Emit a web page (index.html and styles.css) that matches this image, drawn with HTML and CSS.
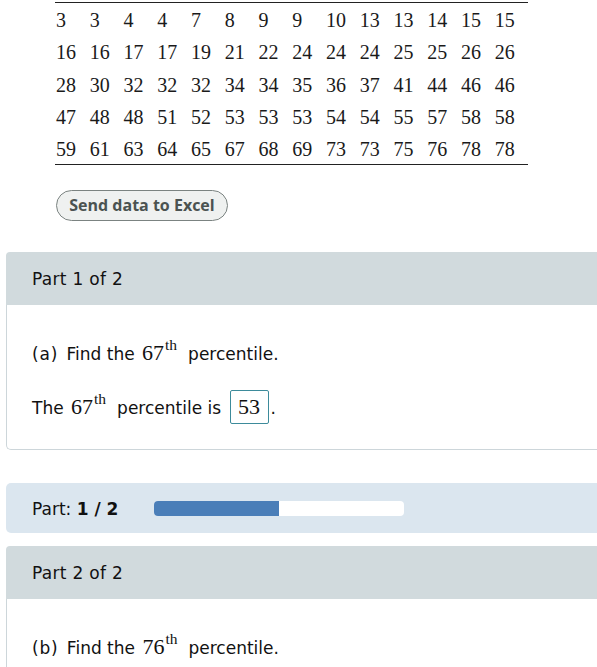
FILE: index.html
```html
<!DOCTYPE html>
<html>
<head>
<meta charset="utf-8">
<link rel="stylesheet" href="styles.css">
</head>
<body>
<div class="data">
  <div class="grid">
    <span>3</span><span>3</span><span>4</span><span>4</span><span>7</span><span>8</span><span>9</span><span>9</span><span>10</span><span>13</span><span>13</span><span>14</span><span>15</span><span>15</span>
    <span>16</span><span>16</span><span>17</span><span>17</span><span>19</span><span>21</span><span>22</span><span>24</span><span>24</span><span>24</span><span>25</span><span>25</span><span>26</span><span>26</span>
    <span>28</span><span>30</span><span>32</span><span>32</span><span>32</span><span>34</span><span>34</span><span>35</span><span>36</span><span>37</span><span>41</span><span>44</span><span>46</span><span>46</span>
    <span>47</span><span>48</span><span>48</span><span>51</span><span>52</span><span>53</span><span>53</span><span>53</span><span>54</span><span>54</span><span>55</span><span>57</span><span>58</span><span>58</span>
    <span>59</span><span>61</span><span>63</span><span>64</span><span>65</span><span>67</span><span>68</span><span>69</span><span>73</span><span>73</span><span>75</span><span>76</span><span>78</span><span>78</span>
  </div>
</div>
<button class="excel">Send data to Excel</button>

<section class="part">
  <div class="part-head">Part 1 of 2</div>
  <div class="part-body">
    <p class="q"><span class="lbl">(a)</span> Find the <span class="mathnum">67</span><span class="ord">th</span>percentile.</p>
    <p class="q q2">The <span class="mathnum">67</span><span class="ord">th</span>percentile is <span class="answer">53</span>.</p>
  </div>
</section>

<div class="progress">
  <span class="ptext">Part: <b>1 / 2</b></span>
  <div class="bar"><div class="fill" style="width:50%"></div></div>
</div>

<section class="part part2">
  <div class="part-head">Part 2 of 2</div>
  <div class="part-body">
    <p class="q"><span class="lbl">(b)</span> Find the <span class="mathnum">76</span><span class="ord">th</span>percentile.</p>
  </div>
</section>
</body>
</html>
```

FILE: styles.css
```css
html {
  overflow: hidden;
  background: #fff;
}
body {
  margin: 0;
  font-family: "DejaVu Sans", Verdana, sans-serif;
  font-size: 17px;
  color: #111;
}
.data {
  margin: 2px 0 0 55px;
  width: 473px;
  border-top: 1px solid #222;
  border-bottom: 1px solid #222;
}
.grid {
  display: grid;
  grid-template-columns: repeat(14, 33.75px);
  grid-auto-rows: 32.25px;
  font-family: "Liberation Serif", "Times New Roman", serif;
  font-size: 20px;
  line-height: 32.25px;
  color: #1a1a1a;
}
.grid span {
  padding-left: 1px;
  padding-top: 1px;
}
.excel {
  display: block;
  margin: 25px 0 0 56px;
  width: 172px;
  height: 31px;
  border: 1px solid #7b8381;
  border-radius: 16px;
  background: #eff1f0;
  font-family: "Open Sans", Lato, sans-serif;
  font-weight: 700;
  font-size: 16px;
  line-height: 27px;
  color: #4b5351;
  padding: 0 0 1px 0;
}
.part {
  margin: 31px -20px 0 6px;
}
.part-head {
  height: 53px;
  background: #d1dadd;
  border-radius: 4px 4px 0 0;
  padding-left: 26px;
  display: flex;
  align-items: center;
  padding-top: 1px;
  box-sizing: border-box;
  letter-spacing: 0.3px;
}
.part-body {
  border-left: 1px solid #cdd6da;
  border-bottom: 1px solid #cdd6da;
  border-bottom-left-radius: 5px;
  padding: 32px 0 25px 25px;
  background: #fff;
}
.q {
  margin: 0;
  height: 34px;
  line-height: 34px;
  white-space: nowrap;
}
.q2 {
  margin-top: 19px;
}
.lbl {
  letter-spacing: 0.8px;
  margin-right: 3px;
}
.mathnum {
  font-family: "Liberation Serif", serif;
  font-size: 22px;
  color: #111;
  line-height: 0;
  margin-left: 2px;
}
.ord {
  font-family: "Liberation Serif", serif;
  font-size: 15.5px;
  line-height: 0;
  vertical-align: 10.5px;
  margin-left: 1px;
  margin-right: 11px;
}
.answer {
  display: inline-block;
  box-sizing: border-box;
  width: 39px;
  height: 34px;
  border: 1px solid #3d8b9b;
  border-radius: 2px;
  text-align: center;
  font-family: "Liberation Serif", serif;
  font-size: 22px;
  line-height: 32px;
  margin-left: 3px;
  margin-right: 2px;
}
.progress {
  margin: 33px -20px 0 6px;
  height: 50px;
  background: #dbe6ef;
  border-radius: 5px;
  display: flex;
  align-items: center;
  padding-left: 26px;
}
.ptext {
  width: 122px;
  padding-top: 2px;
}
.ptext b {
  font-weight: 700;
}
.bar {
  width: 250px;
  height: 15px;
  background: #fff;
  border-radius: 4px;
  overflow: hidden;
}
.fill {
  height: 100%;
  background: #4a7eb8;
}
.part2 {
  margin-top: 13px;
}
```
